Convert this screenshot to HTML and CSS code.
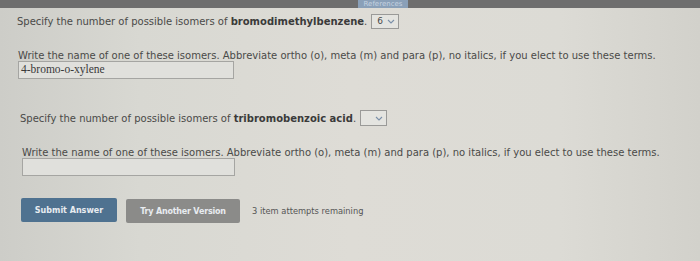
FILE: index.html
```html
<!DOCTYPE html>
<html>
<head>
<meta charset="utf-8">
<link rel="stylesheet" href="styles.css">
</head>
<body>
<div class="topbar">
  <span class="reftab">References</span>
</div>
<div class="content">
  <div class="q q1">
    <span>Specify the number of possible isomers of <b>bromodimethylbenzene</b>.</span>
    <span class="sel"><span class="selval">6</span><svg class="chev" width="8" height="5" viewBox="0 0 8 5"><path d="M1 1 L4 4 L7 1" fill="none" stroke="#7a8fa8" stroke-width="1.1"/></svg></span>
  </div>
  <div class="q q2">Write the name of one of these isomers. Abbreviate ortho (o), meta (m) and para (p), no italics, if you elect to use these terms.</div>
  <div class="inp inp1">4-bromo-o-xylene</div>

  <div class="q q3">
    <span>Specify the number of possible isomers of <b>tribromobenzoic acid</b>.</span>
    <span class="sel sel2"><span class="selval"></span><svg class="chev" width="8" height="5" viewBox="0 0 8 5"><path d="M1 1 L4 4 L7 1" fill="none" stroke="#7a8fa8" stroke-width="1.1"/></svg></span>
  </div>
  <div class="q q4">Write the name of one of these isomers. Abbreviate ortho (o), meta (m) and para (p), no italics, if you elect to use these terms.</div>
  <div class="inp inp2"></div>

  <div class="actions">
    <span class="btn submit">Submit Answer</span>
    <span class="btn another">Try Another Version</span>
    <span class="attempts">3 item attempts remaining</span>
  </div>
</div>
</body>
</html>
```
FILE: styles.css
```css
html, body {
  margin: 0;
  padding: 0;
}
body {
  width: 700px;
  height: 261px;
  overflow: hidden;
  background: linear-gradient(90deg, #cdcdc8 0%, #d8d8d2 20%, #dedcd6 50%, #dcdbd5 80%, #d2d1cb 100%);
  font-family: "DejaVu Sans", Verdana, sans-serif;
  color: #4a4a48;
}
.topbar {
  height: 8px;
  background: #6e6e6e;
  position: relative;
}
.reftab {
  position: absolute;
  left: 358px;
  top: 0;
  width: 50px;
  height: 8px;
  background: #8aa0b8;
  color: #c4d2e0;
  font-size: 7px;
  line-height: 8px;
  text-align: center;
  overflow: hidden;
}
.content {
  padding-left: 17px;
}
.q {
  font-size: 10px;
  line-height: 11px;
  display: flex;
  align-items: center;
  white-space: nowrap;
}
.q b {
  color: #3a3a3a;
}
.q1 {
  margin-top: 5px;
  height: 16px;
}
.sel {
  margin-left: 4px;
  width: 28px;
  height: 15px;
  border: 1px solid #9a9a98;
  background: #e4e4e0;
  display: flex;
  align-items: center;
  justify-content: space-between;
  padding: 0 3px 0 5px;
  box-sizing: border-box;
  font-size: 9px;
}
.sel2 {
  width: 27px;
  height: 16px;
}
.q2 {
  margin-top: 21px;
  margin-left: 1px;
}
.inp {
  height: 18px;
  border: 1px solid #a5a5a2;
  background: #e0e0dc;
  box-sizing: border-box;
  font-family: "Liberation Serif", "Times New Roman", serif;
  font-size: 11.5px;
  color: #3a3a3a;
  padding-left: 2px;
  line-height: 15px;
}
.inp1 {
  width: 216px;
  margin-left: 1px;
  margin-top: 0;
}
.q3 {
  margin-top: 31px;
  margin-left: 3px;
  height: 16px;
}
.q4 {
  margin-top: 21px;
  margin-left: 5px;
}
.inp2 {
  width: 213px;
  margin-left: 5px;
  margin-top: 0;
}
.actions {
  margin-top: 21px;
  margin-left: 4px;
  display: flex;
  align-items: center;
}
.btn {
  font-size: 8px;
  font-weight: bold;
  color: #e8ecf0;
  height: 24px;
  display: flex;
  align-items: center;
  justify-content: center;
  border-radius: 2px;
}
.submit {
  width: 96px;
  background: #4f7290;
}
.another {
  width: 114px;
  margin-left: 9px;
  background: #8b8b89;
  margin-top: 2px;
  letter-spacing: -0.2px;
}
.attempts {
  font-size: 8.3px;
  margin-left: 12px;
  color: #555;
  margin-top: 2px;
}
```
